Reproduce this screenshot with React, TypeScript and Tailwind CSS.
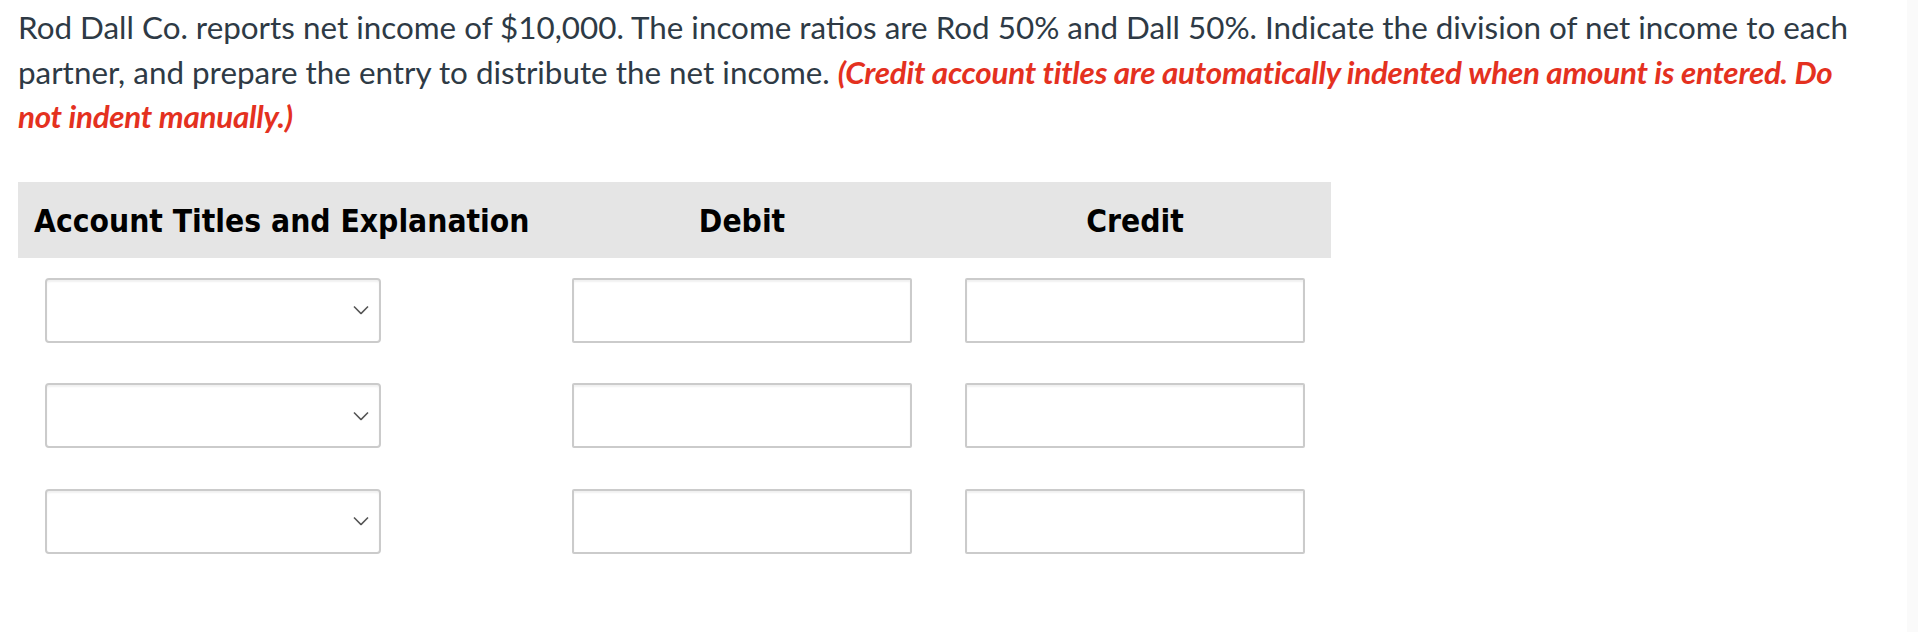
import React from 'react';

const rows = [0, 1, 2];

function AccountSelect() {
  return (
    <div className="relative w-[336px] h-[65px] rounded-[4px] border-2 border-[#cbcbcb] bg-white shadow-[inset_0_2px_2px_rgba(0,0,0,0.06)]">
      <svg
        className="absolute right-[10px] top-1/2 -translate-y-1/2"
        width="16"
        height="9"
        viewBox="0 0 16 9"
        fill="none"
      >
        <path d="M1 1l7 7 7-7" stroke="#555" strokeWidth="1.6" />
      </svg>
    </div>
  );
}

function AmountInput() {
  return (
    <div className="w-[340px] h-[65px] rounded-[2px] border-2 border-[#cbcbcb] bg-white shadow-[inset_0_2px_2px_rgba(0,0,0,0.06)]" />
  );
}

export default function App() {
  return (
    <div className="flex min-h-[632px] bg-white">
      <div className="flex-1 pl-[18px] pt-[5px]">
        <p className="font-['Lato',sans-serif] text-[31.4px] leading-[44.5px] text-[#2e3a45]">
          Rod Dall Co. reports net income of $10,000. The income ratios are Rod 50% and Dall 50%. Indicate the division of net income to each
          <br />
          partner, and prepare the entry to distribute the net income.{' '}
          <em className="font-bold italic tracking-[-0.25px] text-[#e4311f]">
            (Credit account titles are automatically indented when amount is entered. Do
            <br />
            not indent manually.)
          </em>
        </p>

        <div className="mt-[43px] w-[1313px]">
          <div className="grid grid-cols-[527px_394px_392px] h-[76px] items-center pt-[5px] bg-[#e5e5e5] font-['DejaVu_Sans_Condensed','DejaVu_Sans',sans-serif] font-bold text-[31.5px] text-black">
            <div className="pl-[16px]">Account Titles and Explanation</div>
            <div className="text-center">Debit</div>
            <div className="text-center">Credit</div>
          </div>

          {rows.map(r => (
            <div key={r} className="grid grid-cols-[527px_394px_392px] pt-[20px] pb-[20.5px] items-center">
              <div className="pl-[27px]">
                <AccountSelect />
              </div>
              <div className="flex justify-center">
                <AmountInput />
              </div>
              <div className="flex justify-center">
                <AmountInput />
              </div>
            </div>
          ))}
        </div>
      </div>
      <div className="w-[11px] bg-[#fafafa]" />
    </div>
  );
}
